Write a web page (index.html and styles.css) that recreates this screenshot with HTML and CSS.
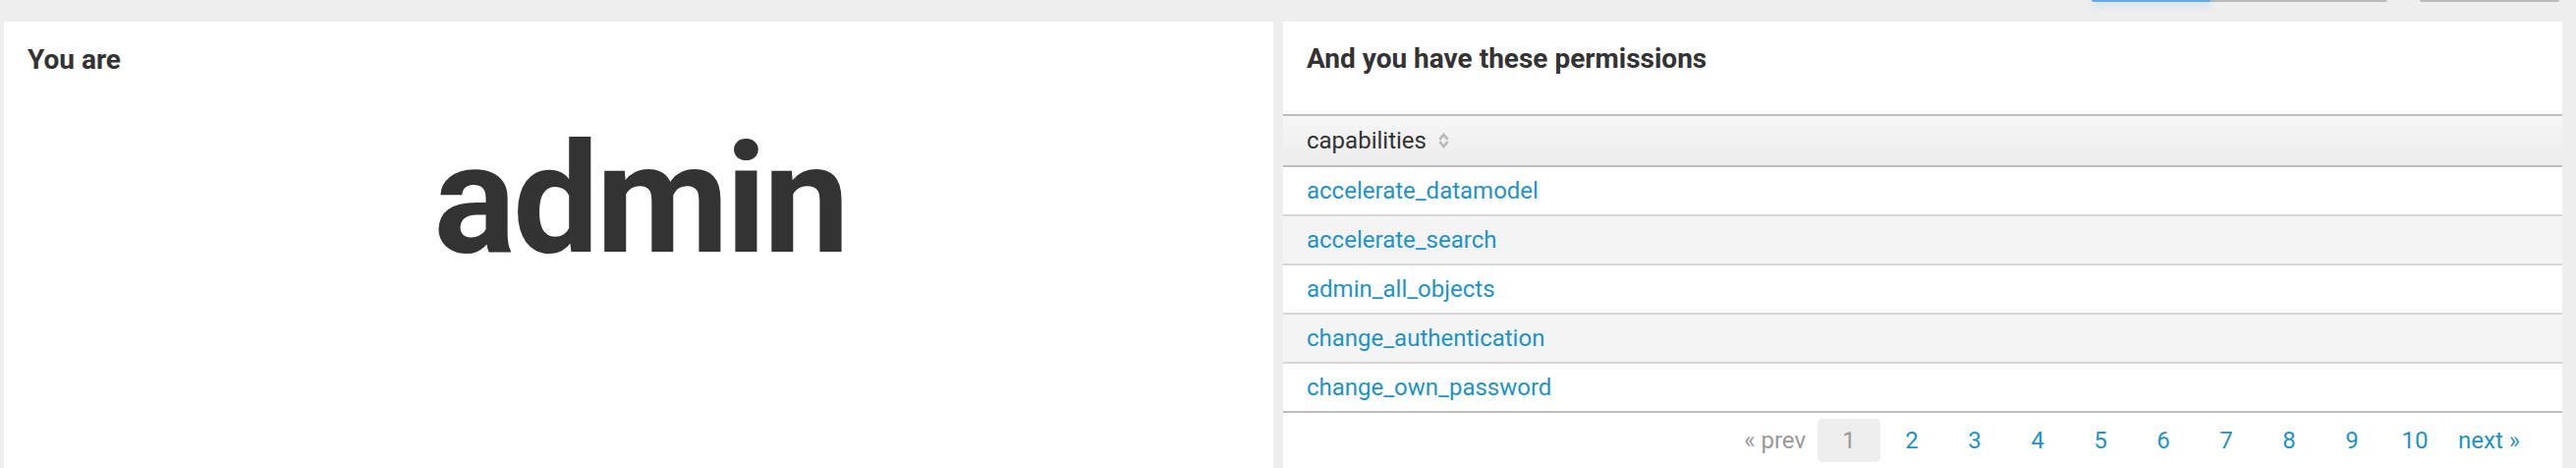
FILE: index.html
```html
<!DOCTYPE html>
<html lang="en">
<head>
<meta charset="utf-8">
<title>You are admin</title>
<link rel="stylesheet" href="styles.css">
</head>
<body>
<div class="page">
  <div class="toolbar">
    <div class="btn-group">
      <span class="btn btn-primary"></span>
      <span class="btn btn-default btn-last"></span>
    </div>
    <span class="btn btn-default btn-single"></span>
  </div>
  <div class="dashboard-row">
    <section class="panel panel-left">
      <h2 class="panel-title panel-title-left">You are</h2>
      <div class="big-value">admin</div>
    </section>
    <section class="panel panel-right">
      <h2 class="panel-title">And you have these permissions</h2>
      <table class="table">
        <thead>
          <tr>
            <th>capabilities<svg class="sort-icon" width="11" height="16" viewBox="0 0 11 16"><polyline points="1.4,6.8 5.5,2 9.6,6.8" fill="none" stroke="#b8b8b8" stroke-width="2.6"/><polyline points="1.4,9.2 5.5,14 9.6,9.2" fill="none" stroke="#b8b8b8" stroke-width="2.6"/></svg></th>
          </tr>
        </thead>
        <tbody>
          <tr><td><a class="cell-link">accelerate_datamodel</a></td></tr>
          <tr><td><a class="cell-link">accelerate_search</a></td></tr>
          <tr><td><a class="cell-link">admin_all_objects</a></td></tr>
          <tr><td><a class="cell-link">change_authentication</a></td></tr>
          <tr><td><a class="cell-link">change_own_password</a></td></tr>
        </tbody>
      </table>
      <nav class="pagination">
        <span class="page-prev">« prev</span>
        <span class="page-num active">1</span>
        <a class="page-num">2</a>
        <a class="page-num">3</a>
        <a class="page-num">4</a>
        <a class="page-num">5</a>
        <a class="page-num">6</a>
        <a class="page-num">7</a>
        <a class="page-num">8</a>
        <a class="page-num">9</a>
        <a class="page-num">10</a>
        <a class="page-next">next »</a>
      </nav>
    </section>
  </div>
</div>
</body>
</html>
```
FILE: styles.css
```css
* { box-sizing: border-box; }

html, body {
  margin: 0;
  padding: 0;
  background: #eeeeee;
}

body {
  font-family: Roboto, "Liberation Sans", Arial, sans-serif;
  color: #333333;
}

.page {
  width: 2622px;
  height: 476px;
  overflow: hidden;
  background: #eeeeee;
  display: flex;
  flex-direction: column;
}

.toolbar {
  height: 22px;
  flex: none;
  display: flex;
  justify-content: flex-end;
  align-items: flex-start;
  gap: 33px;
  padding-right: 17px;
}

.btn-group {
  display: flex;
}

.btn {
  display: block;
  height: 2px;
}

.btn-primary {
  width: 121px;
  background: #62abea;
  border-radius: 0 0 0 4px;
  box-shadow: 0 2px 8px rgba(82, 168, 236, 0.55);
}

.btn-default {
  background: #bbbbbb;
}

.btn-last {
  width: 180px;
  border-radius: 0 0 4px 0;
}

.btn-single {
  width: 142px;
  border-radius: 0 0 4px 4px;
}

.dashboard-row {
  flex: 1;
  display: flex;
  gap: 10px;
  padding: 0 14px 0 4px;
}

.panel {
  background: #ffffff;
  padding-top: 22px;
}

.panel-left {
  width: 1292px;
  padding-left: 24px;
  padding-right: 24px;
}

.panel-right {
  width: 1302px;
}

.panel-title {
  margin: 0;
  font-size: 28px;
  line-height: 32px;
  font-weight: 700;
  color: #333333;
}

.panel-right .panel-title {
  padding: 0 24px;
}

.panel-title-left {
  margin-top: 1px;
}

.big-value {
  margin-top: 48px;
  padding-left: 3px;
  text-align: center;
  font-size: 156px;
  line-height: 156px;
  font-weight: 700;
  letter-spacing: -3px;
  color: #333333;
}

.table {
  margin-top: 40px;
  width: 100%;
  border-collapse: collapse;
  font-size: 24px;
}

.table th {
  text-align: left;
  font-weight: 400;
  color: #333333;
  height: 52px;
  line-height: 48px;
  padding: 0 24px;
  border-top: 2px solid #bdbdbd;
  border-bottom: 2px solid #bdbdbd;
  background: linear-gradient(#f6f6f6, #ededed);
}

.sort-icon {
  margin-left: 12px;
}

.table td {
  height: 50px;
  line-height: 48px;
  padding: 0 24px;
  border-bottom: 2px solid #d6d6d6;
}

.table tbody tr:nth-child(even) td {
  background: #f4f4f4;
}

.table tbody tr:last-child td {
  border-bottom-color: #bdbdbd;
}

.cell-link {
  color: #1e93c6;
  text-decoration: none;
}

.pagination {
  display: flex;
  justify-content: flex-end;
  padding: 6px 31px 0 0;
  font-size: 24px;
  line-height: 44px;
}

.page-prev {
  padding: 0 12px;
  color: #999999;
}

.page-num {
  width: 64px;
  text-align: center;
  color: #1e93c6;
}

.page-num.active {
  background: #eeeeee;
  color: #999999;
  border-radius: 5px;
}

.page-next {
  padding: 0 12px;
  color: #1e93c6;
}
```
